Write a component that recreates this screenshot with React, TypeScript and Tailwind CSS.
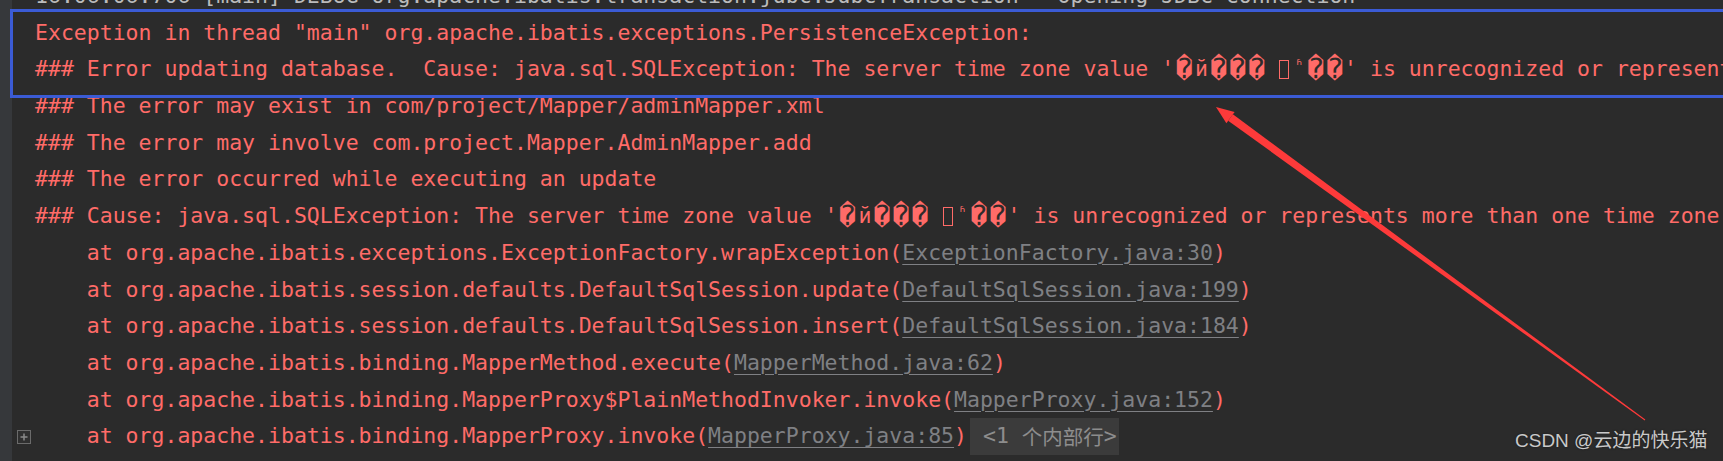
const mono = "font-['DejaVu_Sans_Mono',monospace]";

function Link({ children }: { children: string }) {
  return (
    <span className="text-[#7f8084] underline decoration-[#7f8084] underline-offset-[4px] decoration-1">
      {children}
    </span>
  );
}

function Diamond({ w }: { w: string }) {
  return <span className={`${w} text-center text-[28px] leading-[36.7px]`}>�</span>;
}

function Garbled() {
  return (
    <span className="inline-flex items-center align-top h-[36.7px]">
      <Diamond w="w-[20px]" />
      <span className="w-[15px] text-center">й</span>
      <Diamond w="w-[19px]" />
      <Diamond w="w-[19px]" />
      <Diamond w="w-[19px]" />
      <span className="w-[26px] flex justify-end pr-[3px]">
        <span className="w-[10px] h-[19px] border border-[#ff6b68]" />
      </span>
      <span className="w-[14px] text-center text-[14px] -translate-y-[4px]">ʱ</span>
      <Diamond w="w-[19px]" />
      <Diamond w="w-[19px]" />
    </span>
  );
}

function FoldIcon() {
  return (
    <svg width="14" height="14" viewBox="0 0 14 14">
      <rect x="0.5" y="0.5" width="13" height="13" fill="#2f2f2f" stroke="#6b6b6b" />
      <path d="M3.5 7h7M7 3.5v7" stroke="#8a8a8a" strokeWidth="1.5" />
    </svg>
  );
}

type Row = { text: React.ReactNode; fold?: boolean; color?: string };

const rows: Row[] = [
  {
    text: '16:06:06.706 [main] DEBUG org.apache.ibatis.transaction.jdbc.JdbcTransaction - Opening JDBC Connection',
    color: 'text-[#bbbbbb]',
  },
  { text: 'Exception in thread "main" org.apache.ibatis.exceptions.PersistenceException: ' },
  {
    text: (
      <>
        {"### Error updating database.  Cause: java.sql.SQLException: The server time zone value '"}
        <Garbled />
        {"' is unrecognized or represents more than one time zone. You must configure either the server or JDBC driver"}
      </>
    ),
  },
  { text: '### The error may exist in com/project/Mapper/adminMapper.xml' },
  { text: '### The error may involve com.project.Mapper.AdminMapper.add' },
  { text: '### The error occurred while executing an update' },
  {
    text: (
      <>
        {"### Cause: java.sql.SQLException: The server time zone value '"}
        <Garbled />
        {"' is unrecognized or represents more than one time zone. You must configure either"}
      </>
    ),
  },
  {
    text: (
      <>
        {'    at org.apache.ibatis.exceptions.ExceptionFactory.wrapException('}
        <Link>ExceptionFactory.java:30</Link>)
      </>
    ),
  },
  {
    text: (
      <>
        {'    at org.apache.ibatis.session.defaults.DefaultSqlSession.update('}
        <Link>DefaultSqlSession.java:199</Link>)
      </>
    ),
  },
  {
    text: (
      <>
        {'    at org.apache.ibatis.session.defaults.DefaultSqlSession.insert('}
        <Link>DefaultSqlSession.java:184</Link>)
      </>
    ),
  },
  {
    text: (
      <>
        {'    at org.apache.ibatis.binding.MapperMethod.execute('}
        <Link>MapperMethod.java:62</Link>)
      </>
    ),
  },
  {
    text: (
      <>
        {'    at org.apache.ibatis.binding.MapperProxy$PlainMethodInvoker.invoke('}
        <Link>MapperProxy.java:152</Link>)
      </>
    ),
  },
  {
    fold: true,
    text: (
      <>
        {'    at org.apache.ibatis.binding.MapperProxy.invoke('}
        <Link>MapperProxy.java:85</Link>)
        <span className="inline-flex items-center h-[36.7px] ml-[3px] pl-[13px] pr-[2px] bg-[#3b3b3b] text-[#8d8d8d] align-top">
          {'<1 '}
          <span className="font-['Noto_Sans_CJK_SC',sans-serif] text-[20.5px]">个内部行</span>
          {'>'}
        </span>
      </>
    ),
  },
];

export default function App() {
  return (
    <div className={`relative w-[1723px] h-[461px] overflow-hidden bg-[#2b2b2b] flex ${mono}`}>
      <div className="w-[12px] shrink-0 bg-[#36383b]" />
      <div className="flex flex-col -mt-[22px] text-[21.5px]">
        {rows.map((r, i) => (
          <div key={i} className="flex h-[36.7px] leading-[36.7px] shrink-0">
            <div className="w-[23px] shrink-0 flex items-center justify-center">
              {r.fold && <FoldIcon />}
            </div>
            <div className={`whitespace-pre ${r.color ?? 'text-[#ff6b68]'}`}>{r.text}</div>
          </div>
        ))}
      </div>

      {/* annotation box */}
      <div className="absolute left-[10px] top-[9px] w-[1716px] h-[89px] border-[3px] border-[#3b5bd5] pointer-events-none" />

      {/* annotation arrow */}
      <svg className="absolute inset-0 pointer-events-none" width="1723" height="461" viewBox="0 0 1723 461">
        <polygon points="1232.85,114.37 1645.3,419.6 1644.7,420.4 1228.15,120.83" fill="#fd3a3a" />
        <polygon points="1216,107 1234.6,112 1226.4,123.3" fill="#fd3a3a" />
      </svg>

      <div className="absolute left-[1515px] top-[427px] text-[19px] leading-[28px] text-[#c9c9c9] font-['Liberation_Sans','Noto_Sans_CJK_SC',sans-serif] whitespace-pre [text-shadow:0_0_2px_#1a1a1a]">
        CSDN @云边的快乐猫
      </div>
    </div>
  );
}
